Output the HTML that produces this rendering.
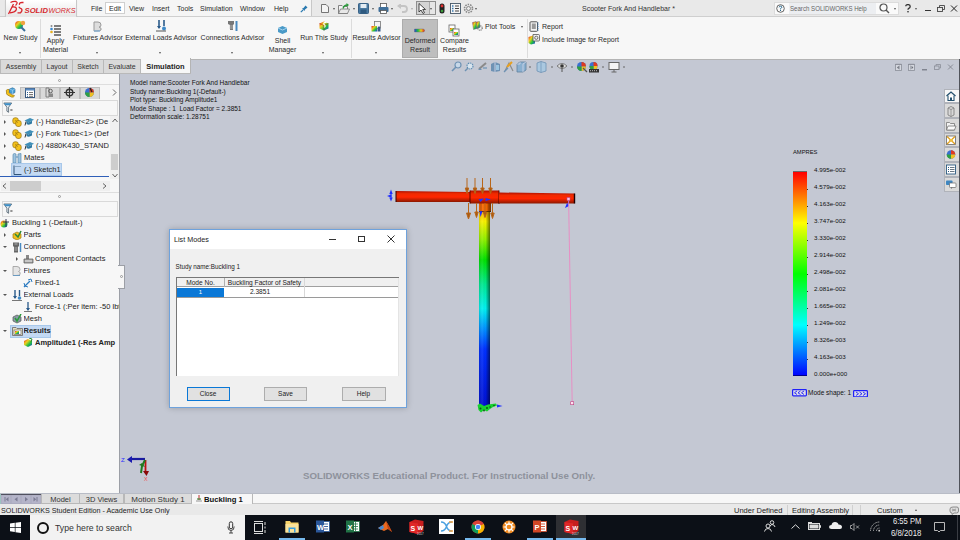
<!DOCTYPE html>
<html><head><meta charset="utf-8">
<style>
*{margin:0;padding:0;box-sizing:border-box}
html,body{width:960px;height:540px;overflow:hidden;background:#c4c8d3;font-family:"Liberation Sans",sans-serif;color:#222;font-size:7px}
.a{position:absolute}
.t{position:absolute;white-space:nowrap;line-height:1}
.c{transform:translateX(-50%)}
.m{font-size:7px;color:#2a2a2a}
.dd{position:absolute;width:0;height:0;border-left:1.6px solid transparent;border-right:1.6px solid transparent;border-top:2px solid #555}
.tab{position:absolute;top:59px;height:14px;background:#dadada;border:1px solid #b9b9b9;border-bottom:none;font-size:7px;color:#333;text-align:center;line-height:14.2px}
.tr{position:absolute;white-space:nowrap;line-height:1;font-size:7.5px;color:#222}
.ex{position:absolute;width:0;height:0;border-top:2px solid transparent;border-bottom:2px solid transparent;border-left:2.5px solid #555}
.exd{position:absolute;width:0;height:0;border-left:2px solid transparent;border-right:2px solid transparent;border-top:2.5px solid #555}
.vt{position:absolute;white-space:nowrap;line-height:1;font-size:6.5px;color:#111}
.lg{position:absolute;white-space:nowrap;line-height:1;font-size:6.25px;color:#111;left:814px}
.tk{position:absolute;left:807px;width:1px;height:1px;background:#333}
</style></head><body>
<svg width="0" height="0" style="position:absolute"><defs>
<linearGradient id="rb" x1="0" y1="0" x2="1" y2="1"><stop offset="0" stop-color="#e02020"/><stop offset=".35" stop-color="#f0d020"/><stop offset=".65" stop-color="#20c040"/><stop offset="1" stop-color="#2040e0"/></linearGradient>
<linearGradient id="rbh" x1="0" y1="0" x2="1" y2="0"><stop offset="0" stop-color="#2040e0"/><stop offset=".35" stop-color="#20c040"/><stop offset=".65" stop-color="#f0d020"/><stop offset="1" stop-color="#e02020"/></linearGradient>
</defs></svg>
<!-- ===== title bar ===== -->
<div class="a" style="left:0;top:0;width:960px;height:17px;background:#e9e9e9;border-bottom:1px solid #cfcfcf"></div>
<div class="a" style="left:77px;top:0;width:234px;height:16px;background:#f5f5f5"></div>
<div class="a" style="left:311px;top:0;width:1.5px;height:16px;background:#c8c8c8"></div>
<div class="a" style="left:5px;top:0;width:72px;height:19px;background:linear-gradient(#ffffff,#e4e4e4);border:1px solid #c8c8c8;border-top:none;box-shadow:0 1px 1px rgba(0,0,0,.08)"></div>
<svg class="a" style="left:7px;top:0px" width="70" height="16" viewBox="0 0 70 16">
 <path d="M1.5 14 L6.5 4 M3.5 2.5 Q6 1 9 1.5 Q11.5 2.5 8.5 5.5 M5.5 7 Q10 6.5 9.3 9.5 Q8.5 12.3 3 12.8 M12.5 4.8 Q12 2.5 15 2.5 H16.5 M11.8 6.8 Q12.5 8.5 14.5 8.8 Q15.8 10.5 13.5 12.8 H10.5" stroke="#d8262e" stroke-width="1.3" fill="none"/>
 <text x="17.5" y="12.5" font-family="Liberation Sans" font-weight="bold" font-style="italic" font-size="8" fill="#d52a2f" textLength="23.5" lengthAdjust="spacingAndGlyphs">SOLID</text>
 <text x="41.5" y="12.5" font-family="Liberation Sans" font-style="italic" font-size="8" fill="#d52a2f" textLength="27" lengthAdjust="spacingAndGlyphs">WORKS</text>
</svg>
<div class="t m" style="left:91px;top:5px">File</div>
<div class="a" style="left:105px;top:2px;width:20px;height:12px;background:#fff;border:1px solid #cfcfcf"></div>
<div class="t m" style="left:109px;top:5px">Edit</div>
<div class="t m" style="left:129px;top:5px">View</div>
<div class="t m" style="left:152px;top:5px">Insert</div>
<div class="t m" style="left:177px;top:5px">Tools</div>
<div class="t m" style="left:200px;top:5px">Simulation</div>
<div class="t m" style="left:240px;top:5px">Window</div>
<div class="t m" style="left:274px;top:5px">Help</div>
<svg class="a" style="left:300px;top:5px" width="8" height="8" viewBox="0 0 8 8"><path d="M0.8 7.2 L3 5" stroke="#2a7ab0" stroke-width="1.2"/><path d="M2 3.5 L4.5 6 L5 4.5 L7.5 2.5 L5.5 0.5 L3.5 3 Z" fill="#2a7ab0"/></svg>
<div class="a" style="left:312px;top:0;width:648px;height:16px;background:#e9e9e9"></div>
<!-- new -->
<svg class="a" style="left:321px;top:4px" width="8" height="9" viewBox="0 0 8 9"><path d="M0.5 0.5 H5 L7.5 3 V8.5 H0.5 Z" fill="#f4f4f4" stroke="#666" stroke-width="0.9"/></svg>
<div class="dd" style="left:333px;top:8px"></div>
<!-- open -->
<svg class="a" style="left:338px;top:3px" width="12" height="11" viewBox="0 0 12 11"><path d="M0.5 2.5 H4 L5 3.5 H9.5 V10.5 H0.5 Z" fill="#f3f3f3" stroke="#777" stroke-width="0.9"/><path d="M0.5 10.5 L2.5 6 H11.5 L9.5 10.5 Z" fill="#e8e8e8" stroke="#777" stroke-width="0.8"/><path d="M5 5.5 Q6 2 9.5 2" stroke="#2a9a3a" stroke-width="1.3" fill="none"/><path d="M8.5 0 L11 2 L8.5 4 Z" fill="#2a9a3a"/></svg>
<div class="dd" style="left:353px;top:8px"></div>
<!-- save -->
<svg class="a" style="left:358px;top:3px" width="11" height="11" viewBox="0 0 11 11"><rect x="0.5" y="0.5" width="10" height="10" rx="0.8" fill="#4a7ba3" stroke="#2f5a80" stroke-width="0.9"/><rect x="2.5" y="1" width="6" height="4" fill="#e4edf4"/><rect x="2.5" y="6.5" width="6" height="4" fill="#2f5a80"/></svg>
<div class="dd" style="left:372px;top:8px"></div>
<!-- print -->
<svg class="a" style="left:378px;top:3px" width="11" height="11" viewBox="0 0 11 11"><rect x="2.5" y="0.5" width="6" height="4" fill="#fff" stroke="#555" stroke-width="0.8"/><rect x="0.5" y="4" width="10" height="5" rx="1" fill="#3f6f99"/><rect x="2.5" y="7.5" width="6" height="3" fill="#fff" stroke="#555" stroke-width="0.8"/></svg>
<div class="dd" style="left:391px;top:8px"></div>
<!-- undo -->
<svg class="a" style="left:397px;top:4px" width="11" height="9" viewBox="0 0 11 9"><path d="M3 2 H7 Q10 2 10 5 Q10 8 7 8 H5" stroke="#c4c4c4" stroke-width="1.8" fill="none"/><path d="M0 2 L4 -1 V5 Z" fill="#c4c4c4"/></svg>
<div class="dd" style="left:411px;top:8px;border-top-color:#aaa"></div>
<!-- select pressed -->
<div class="a" style="left:416px;top:1px;width:20px;height:14px;background:#d4d4d4;border:1px solid #8e8e8e"></div>
<div class="a" style="left:429px;top:2px;width:6px;height:12px;background:#e6e6e6;border-left:1px solid #aaa"></div>
<svg class="a" style="left:418px;top:3px" width="9" height="11" viewBox="0 0 9 11"><path d="M1 0.5 V9 L3 7 L5 10.5 L6.5 9.7 L4.7 6.5 H7.5 Z" fill="#fff" stroke="#333" stroke-width="0.9"/></svg>
<div class="dd" style="left:430px;top:8px"></div>
<!-- traffic light -->
<svg class="a" style="left:439px;top:3px" width="6" height="11" viewBox="0 0 6 11"><rect x="0.5" y="0.5" width="5" height="10" rx="2.5" fill="#222"/><circle cx="3" cy="3" r="1.4" fill="#e03030"/><circle cx="3" cy="8" r="1.3" fill="#3a9a3a"/></svg>
<!-- list -->
<svg class="a" style="left:450px;top:3px" width="11" height="11" viewBox="0 0 11 11"><rect x="0.5" y="0.5" width="10" height="10" fill="#f4f4f4" stroke="#456" stroke-width="0.9"/><path d="M2 3 H3.5 M2 5.5 H3.5 M2 8 H3.5" stroke="#3a7ab0" stroke-width="1.3"/><path d="M5 3 H9 M5 5.5 H9 M5 8 H9" stroke="#444" stroke-width="1"/></svg>
<!-- gear -->
<svg class="a" style="left:463px;top:3px" width="11" height="11" viewBox="0 0 11 11"><circle cx="5.5" cy="5.5" r="4" fill="none" stroke="#888" stroke-width="1.6" stroke-dasharray="1.5 1"/><circle cx="5.5" cy="5.5" r="2" fill="none" stroke="#888" stroke-width="1"/></svg>
<div class="dd" style="left:475px;top:8px"></div>

<div class="t m" style="left:582px;top:5px;color:#333">Scooter Fork And Handlebar *</div>
<!-- search -->
<div class="a" style="left:774px;top:2px;width:125px;height:13px;background:#fafafa;border:1px solid #dcdcdc"></div>
<div class="a" style="left:789px;top:3px;width:87px;height:11px;background:#eceef1"></div>
<svg class="a" style="left:776px;top:4px" width="9" height="9" viewBox="0 0 9 9"><circle cx="4.5" cy="4.5" r="3.8" fill="none" stroke="#555" stroke-width="0.9"/><path d="M3.2 3.3 Q3.2 2.2 4.5 2.2 Q5.8 2.2 5.8 3.3 Q5.8 4 4.5 4.6 V5.4" fill="none" stroke="#2a6a90" stroke-width="1"/><rect x="4" y="6" width="1" height="1" fill="#2a6a90"/></svg>
<div class="t" style="left:790px;top:5.5px;font-size:6.5px;color:#666;transform:scaleX(.94);transform-origin:0 0">Search SOLIDWORKS Help</div>
<svg class="a" style="left:879px;top:3px" width="11" height="11" viewBox="0 0 11 11"><circle cx="4.5" cy="4.5" r="3.5" stroke="#555" stroke-width="1.2" fill="none"/><path d="M7 7 L10 10" stroke="#555" stroke-width="1.4"/></svg>
<div class="dd" style="left:894px;top:8px"></div>
<svg class="a" style="left:905px;top:4px" width="6" height="9" viewBox="0 0 6 9"><path d="M0.8 2.3 Q0.8 0.6 3 0.6 Q5.2 0.6 5.2 2.4 Q5.2 3.6 3.8 4.3 Q3 4.7 3 5.8" fill="none" stroke="#333" stroke-width="1.3"/><rect x="2.3" y="7" width="1.4" height="1.4" fill="#333"/></svg>
<div class="dd" style="left:915px;top:8px"></div>
<div class="a" style="left:925px;top:10px;width:5.5px;height:1.2px;background:#333"></div>
<svg class="a" style="left:937px;top:4.5px" width="8" height="7" viewBox="0 0 8 7"><rect x="0.5" y="2.5" width="5" height="4" fill="none" stroke="#444" stroke-width="0.9"/><path d="M2.5 2.5 V0.5 H7.5 V4.5 H5.5" fill="none" stroke="#444" stroke-width="0.9"/></svg>
<svg class="a" style="left:950px;top:5px" width="8" height="7" viewBox="0 0 8 7"><path d="M1 0.5 L7 6.5 M7 0.5 L1 6.5" stroke="#222" stroke-width="1"/></svg>

<!-- ===== ribbon ===== -->
<div class="a" style="left:0;top:17px;width:960px;height:42px;background:#f7f7f7"></div><div class="a" style="left:190px;top:58.5px;width:770px;height:1px;background:#b4b4b4"></div>
<!-- New Study -->
<svg class="a" style="left:14px;top:20px" width="13" height="13" viewBox="0 0 13 13"><circle cx="5" cy="5" r="4" fill="url(#rb)"/><circle cx="9" cy="3" r="2.2" fill="#f0a040"/><path d="M7.5 7.5 L11 11" stroke="#3a6f9a" stroke-width="2"/></svg>
<div class="t m c" style="left:20.5px;top:33.5px">New Study</div>
<div class="dd" style="left:18.5px;top:52px"></div>
<div class="a" style="left:40px;top:19px;width:1px;height:39px;background:#dcdcdc"></div>
<!-- Apply material -->
<svg class="a" style="left:50px;top:24px" width="12" height="12" viewBox="0 0 12 12"><path d="M4 2 H11 M4 5 H11 M4 8 H11 M4 11 H11" stroke="#555" stroke-width="1.3"/><circle cx="1.5" cy="5" r="1.3" fill="#3a8ad0"/><circle cx="1.5" cy="8" r="1.3" fill="#e8b020"/><circle cx="1.5" cy="2" r="1" fill="#888"/></svg>
<div class="t m c" style="left:55.5px;top:36.8px">Apply</div>
<div class="t m c" style="left:55.5px;top:45.8px">Material</div>
<!-- Fixtures advisor -->
<svg class="a" style="left:92px;top:21px" width="11" height="11" viewBox="0 0 11 11"><path d="M2 1 H6 Q9 1 9 4 Q9 6 7 6 Q10 7 9 9 Q8 10 5 10 H2 Z" stroke="#999" stroke-width="1" fill="#ddd"/><path d="M2 10 L8 10" stroke="#7aaad0" stroke-width="1.2"/></svg>
<div class="t m c" style="left:98px;top:33.5px">Fixtures Advisor</div>
<div class="dd" style="left:95.5px;top:52px"></div>
<!-- External Loads -->
<svg class="a" style="left:156px;top:20px" width="11" height="12" viewBox="0 0 11 12"><path d="M3 0 V8" stroke="#2a5a8a" stroke-width="1.6"/><path d="M1 6 L3 9 L5 6 Z" fill="#2a5a8a"/><path d="M8 0 V6" stroke="#2a5a8a" stroke-width="1.6"/><circle cx="8" cy="8.5" r="2" fill="#3f8ac8"/><path d="M0 11 H10" stroke="#555" stroke-width="1"/></svg>
<div class="t m c" style="left:161px;top:33.5px">External Loads Advisor</div>
<div class="dd" style="left:159px;top:52px"></div>
<!-- Connections -->
<svg class="a" style="left:227px;top:20px" width="12" height="12" viewBox="0 0 12 12"><path d="M1 1 H7 V4 L6 5 V10 H3 V5 L1 4 Z" fill="#777"/><path d="M2 6 H6 M2 8 H6" stroke="#ccc" stroke-width="0.7"/><path d="M9.5 1 V11" stroke="#4a8ac0" stroke-width="2"/></svg>
<div class="t m c" style="left:232.5px;top:33.5px">Connections Advisor</div>
<div class="dd" style="left:230.5px;top:52px"></div>
<!-- Shell Manager -->
<svg class="a" style="left:277px;top:25px" width="11" height="10" viewBox="0 0 11 10"><path d="M1 3 L5.5 1 L10 3 V7 L5.5 9 L1 7 Z" fill="#4a9ac8"/><path d="M1 3 L5.5 5 L10 3" stroke="#a8d4ee" stroke-width="1" fill="none"/></svg>
<div class="t m c" style="left:282.5px;top:36.8px">Shell</div>
<div class="t m c" style="left:282.5px;top:45.8px">Manager</div>
<!-- Run This Study -->
<svg class="a" style="left:318px;top:20px" width="12" height="12" viewBox="0 0 12 12"><path d="M1.5 3.5 L6 1.5 L10.5 3.5 V8.5 L6 10.5 L1.5 8.5 Z" fill="url(#rb)"/><path d="M1.5 3.5 L6 5.5 L10.5 3.5 M6 5.5 V10.5" stroke="#a02020" stroke-width="0.5" fill="none"/><path d="M8.5 2.5 Q5 2 6 4.5 Q8 5.5 6.5 7.5" stroke="#fff" stroke-width="1.1" fill="none"/></svg>
<div class="t m c" style="left:324px;top:33.5px">Run This Study</div>
<div class="dd" style="left:322px;top:52px"></div>
<div class="a" style="left:351px;top:19px;width:1px;height:39px;background:#dcdcdc"></div>
<!-- Results advisor -->
<svg class="a" style="left:371px;top:21px" width="11" height="11" viewBox="0 0 11 11"><rect x="3.5" y="0.5" width="6" height="7" fill="#f4f4f4" stroke="#777" stroke-width="0.8"/><rect x="0.5" y="5" width="5.5" height="5.5" fill="url(#rb)"/><circle cx="8" cy="7" r="1.4" fill="#345a8a"/><rect x="6.5" y="8" width="3" height="2.5" fill="#345a8a"/></svg>
<div class="t m c" style="left:376.5px;top:33.5px">Results Advisor</div>
<div class="dd" style="left:374.5px;top:52px"></div>
<!-- Deformed result -->
<div class="a" style="left:402px;top:19px;width:36px;height:39px;background:#bebebe;border:1px solid #acacac"></div>
<svg class="a" style="left:414px;top:28px" width="11" height="5" viewBox="0 0 11 5"><path d="M0.5 1 H9 Q10.5 1 10.5 2.5 Q10.5 4 9 4 H0.5 Z" fill="url(#rbh)" stroke="#666" stroke-width="0.4"/></svg>
<div class="t m c" style="left:420px;top:36.8px">Deformed</div>
<div class="t m c" style="left:420px;top:45.8px">Result</div>
<!-- Compare results -->
<svg class="a" style="left:448px;top:24px" width="12" height="13" viewBox="0 0 12 13"><rect x="1" y="1" width="6" height="7" fill="#fff" stroke="#666" stroke-width="0.8"/><rect x="2" y="4" width="4" height="3" fill="url(#rb)"/><rect x="5" y="5" width="6" height="7" fill="#fff" stroke="#666" stroke-width="0.8"/><rect x="6" y="8" width="4" height="3" fill="url(#rb)"/></svg>
<div class="t m c" style="left:454.5px;top:36.8px">Compare</div>
<div class="t m c" style="left:454.5px;top:45.8px">Results</div>
<!-- Plot tools -->
<svg class="a" style="left:472px;top:21px" width="11" height="10" viewBox="0 0 11 10"><path d="M0.5 1.5 L4 0.5 L5 7.5 L1.5 8.5 Z" fill="url(#rb)" stroke="#555" stroke-width="0.4"/><path d="M4.2 1 L7.5 0.5 L8 6.5 L5 7.5 Z" fill="url(#rb)" stroke="#555" stroke-width="0.4"/><circle cx="8" cy="7" r="2.2" fill="none" stroke="#666" stroke-width="1.1" stroke-dasharray="1 0.6"/></svg>
<div class="t m" style="left:485px;top:22.5px">Plot Tools</div>
<div class="dd" style="left:520.5px;top:25.5px"></div>
<div class="a" style="left:527px;top:19px;width:1px;height:39px;background:#dcdcdc"></div>
<!-- Report -->
<svg class="a" style="left:529px;top:21px" width="11" height="11" viewBox="0 0 11 11"><rect x="1" y="0.8" width="7.5" height="9.5" rx="0.8" fill="#f4f4f4" stroke="#444" stroke-width="0.9"/><rect x="2.8" y="2.5" width="4" height="5.5" fill="#9a9a9a"/><path d="M9 1.5 V10" stroke="#3a7ab8" stroke-width="1" stroke-dasharray="1 0.8"/></svg>
<div class="t m" style="left:542px;top:22.5px">Report</div>
<svg class="a" style="left:528px;top:34px" width="12" height="11" viewBox="0 0 12 11"><path d="M0.5 3 L5 1.5 L7 3 V9.5 L3 10.5 L0.5 9 Z" fill="url(#rb)"/><path d="M5 0.5 H10.5 Q11.5 0.5 11.5 1.5 V6 Q11.5 7 10.5 7 H5 Z" fill="#eee" stroke="#555" stroke-width="0.8"/><circle cx="8.3" cy="3.8" r="1.6" fill="none" stroke="#555" stroke-width="0.8"/></svg>
<div class="t m" style="left:542px;top:35.5px">Include Image for Report</div>


<!-- ===== tabs ===== -->
<div class="tab" style="left:0;width:42px">Assembly</div>
<div class="tab" style="left:41px;width:32px">Layout</div>
<div class="tab" style="left:72px;width:32px">Sketch</div>
<div class="tab" style="left:103px;width:38px">Evaluate</div>
<div class="tab" style="left:141px;top:58px;height:15px;width:50px;background:#f7f7f7;font-weight:bold;color:#222;border:none;border-right:1px solid #b4b4b4;line-height:17.6px;font-size:7.5px">Simulation</div>
<div class="a" style="left:0;top:73px;width:191px;height:1px;background:#b9b9b9"></div>

<!-- ===== left panel ===== -->
<div class="a" style="left:0;top:74px;width:120px;height:420px;background:#f7f7f7;border-right:1px solid #9c9fa6"></div>
<!-- top handle strip -->
<div class="a" style="left:0;top:74px;width:119px;height:11px;background:#f7f7f7;border-bottom:1px solid #dedede"></div>
<div class="a" style="left:57.5px;top:78.5px;width:3px;height:3px;border:1px solid #999;border-radius:50%"></div>
<!-- icon tabs -->
<div class="a" style="left:0;top:85px;width:119px;height:14px;background:#f7f7f7"></div>
<div class="a" style="left:19.5px;top:86.5px;width:20px;height:12.5px;background:#d9d9d9;border:1px solid #bdbdbd;border-bottom:none"></div>
<div class="a" style="left:39.5px;top:86.5px;width:20px;height:12.5px;background:#d9d9d9;border:1px solid #bdbdbd;border-bottom:none"></div>
<div class="a" style="left:59.5px;top:86.5px;width:20px;height:12.5px;background:#d9d9d9;border:1px solid #bdbdbd;border-bottom:none"></div>
<div class="a" style="left:79.5px;top:86.5px;width:20px;height:12.5px;background:#d9d9d9;border:1px solid #bdbdbd;border-bottom:none"></div>
<svg class="a" style="left:5px;top:86.5px" width="11" height="11" viewBox="0 0 11 11"><path d="M1.5 5 Q0.5 3 2.5 2.5 L4 2.5 Q5 4 4 5.5 L7 8 Q9 7.5 9.5 9 Q8.5 10.5 6.5 10 L2.5 8 Q1 7 1.5 5 Z" fill="#f2c21a" stroke="#9a7410" stroke-width="0.7"/><path d="M4.5 2 L7.5 0.8 L10 2 V5.5 L7.5 6.8 L4.5 5.5 Z" fill="#4aa0d8" stroke="#2a6a98" stroke-width="0.6"/><path d="M4.5 2 L7.5 3.2 L10 2 M7.5 3.2 V6.8" stroke="#bfe0f4" stroke-width="0.5" fill="none"/></svg>
<svg class="a" style="left:25px;top:88px" width="10" height="10" viewBox="0 0 10 10"><rect x="0.5" y="0.5" width="9" height="9" fill="#fff" stroke="#3a5a80" stroke-width="1"/><rect x="0.5" y="0.5" width="9" height="2" fill="#5a8ac0"/><path d="M2 4.5 H3 M2 6.5 H3 M2 8.3 H3" stroke="#2c5d8f" stroke-width="1"/><path d="M4 4.5 H8 M4 6.5 H8 M4 8.3 H8" stroke="#555" stroke-width="0.8"/></svg>
<svg class="a" style="left:45px;top:87px" width="9" height="11" viewBox="0 0 9 11"><path d="M1 1 H4 V10 H1 Z" fill="none" stroke="#777" stroke-width="0.9"/><circle cx="5.5" cy="4" r="1.8" fill="none" stroke="#555" stroke-width="0.9"/><rect x="4" y="6.5" width="4" height="3.5" fill="#888"/></svg>
<svg class="a" style="left:64px;top:87px" width="11" height="11" viewBox="0 0 11 11"><circle cx="5.5" cy="5.5" r="3.3" fill="none" stroke="#333" stroke-width="1.4"/><path d="M5.5 0 V11 M0 5.5 H11" stroke="#333" stroke-width="1.2"/></svg>
<svg class="a" style="left:84px;top:87px" width="11" height="11" viewBox="0 0 11 11"><circle cx="5.5" cy="5.5" r="4.5" fill="#3a70d0"/><path d="M5.5 5.5 L5.5 1 A4.5 4.5 0 0 1 10 5.5 Z" fill="#e03a20"/><path d="M5.5 5.5 L10 5.5 A4.5 4.5 0 0 1 5.5 10 Z" fill="#f0c020"/><path d="M5.5 5.5 L5.5 10 A4.5 4.5 0 0 1 1 5.5 Z" fill="#30a040"/><path d="M6 1 L8 5" stroke="#222" stroke-width="1.2"/></svg>
<svg class="a" style="left:111.5px;top:89px" width="5" height="7" viewBox="0 0 5 7"><path d="M1 0.5 L4 3.5 L1 6.5" stroke="#555" stroke-width="0.9" fill="none"/></svg>
<!-- filter box 1 -->
<div class="a" style="left:1.5px;top:99.5px;width:116px;height:16px;background:#f7f7f7;border:1px solid #d9d9d9"></div>
<svg class="a" style="left:3px;top:102px" width="10" height="11" viewBox="0 0 10 11"><path d="M0.8 1 H8.7 L5.6 5.2 V10.3 L3.9 9.2 V5.2 Z" fill="#e8f0f6" stroke="#4a5a68" stroke-width="0.8"/><path d="M1 1.2 H8.5 L7 3.2 H2.5 Z" fill="#3d8fc8"/><rect x="7.3" y="7.5" width="2.2" height="1" fill="#333"/></svg>
<!-- tree 1 -->
<div class="a" style="left:110px;top:115.5px;width:8.5px;height:63px;background:#f0f0f0"></div>
<svg class="a" style="left:111.5px;top:118px" width="6" height="5" viewBox="0 0 6 5"><path d="M0.5 4 L3 1 L5.5 4" stroke="#555" stroke-width="0.9" fill="none"/></svg>
<div class="a" style="left:110.5px;top:154px;width:7px;height:16px;background:#cdcdcd"></div>
<svg class="a" style="left:111.5px;top:173px" width="6" height="5" viewBox="0 0 6 5"><path d="M0.5 1 L3 4 L5.5 1" stroke="#555" stroke-width="0.9" fill="none"/></svg>
<div class="ex" style="left:4px;top:119.5px"></div>
<svg class="a" style="left:12px;top:116.5px" width="10" height="10" viewBox="0 0 10 10"><rect x="0.8" y="0.8" width="5.5" height="6" rx="2.2" fill="#f4c21c" stroke="#9a7410" stroke-width="0.7"/><rect x="3.7" y="3.5" width="5.5" height="6" rx="2.2" fill="#f4c21c" stroke="#9a7410" stroke-width="0.7"/><path d="M3 3 Q5 4 5.5 6" stroke="#9a7410" stroke-width="0.6" fill="none"/></svg>
<svg class="a" style="left:24px;top:117.0px" width="10" height="9" viewBox="0 0 10 9"><path d="M0.5 3.5 L6 1 L10 2.8 L4.5 5.5 Z" fill="#3f8fb8"/><path d="M2.5 4.5 V7 Q5 8.5 8 6.5 V3.8 L4.5 5.5 Z" fill="#2f7aa3"/><path d="M2 4.5 L1 8.5" stroke="#222" stroke-width="0.9"/></svg>
<div class="tr" style="left:36px;top:117.4px;line-height:1.3;width:73px;overflow:hidden">(-) HandleBar&lt;2&gt; (De</div>
<div class="ex" style="left:4px;top:131.5px"></div>
<svg class="a" style="left:12px;top:128.5px" width="10" height="10" viewBox="0 0 10 10"><rect x="0.8" y="0.8" width="5.5" height="6" rx="2.2" fill="#f4c21c" stroke="#9a7410" stroke-width="0.7"/><rect x="3.7" y="3.5" width="5.5" height="6" rx="2.2" fill="#f4c21c" stroke="#9a7410" stroke-width="0.7"/><path d="M3 3 Q5 4 5.5 6" stroke="#9a7410" stroke-width="0.6" fill="none"/></svg>
<svg class="a" style="left:24px;top:129.0px" width="10" height="9" viewBox="0 0 10 9"><path d="M0.5 3.5 L6 1 L10 2.8 L4.5 5.5 Z" fill="#3f8fb8"/><path d="M2.5 4.5 V7 Q5 8.5 8 6.5 V3.8 L4.5 5.5 Z" fill="#2f7aa3"/><path d="M2 4.5 L1 8.5" stroke="#222" stroke-width="0.9"/></svg>
<div class="tr" style="left:36px;top:129.4px;line-height:1.3;width:73px;overflow:hidden">(-) Fork Tube&lt;1&gt; (Def</div>
<div class="ex" style="left:4px;top:143.5px"></div>
<svg class="a" style="left:12px;top:140.5px" width="10" height="10" viewBox="0 0 10 10"><rect x="0.8" y="0.8" width="5.5" height="6" rx="2.2" fill="#f4c21c" stroke="#9a7410" stroke-width="0.7"/><rect x="3.7" y="3.5" width="5.5" height="6" rx="2.2" fill="#f4c21c" stroke="#9a7410" stroke-width="0.7"/><path d="M3 3 Q5 4 5.5 6" stroke="#9a7410" stroke-width="0.6" fill="none"/></svg>
<svg class="a" style="left:24px;top:141.0px" width="10" height="9" viewBox="0 0 10 9"><path d="M0.5 3.5 L6 1 L10 2.8 L4.5 5.5 Z" fill="#3f8fb8"/><path d="M2.5 4.5 V7 Q5 8.5 8 6.5 V3.8 L4.5 5.5 Z" fill="#2f7aa3"/><path d="M2 4.5 L1 8.5" stroke="#222" stroke-width="0.9"/></svg>
<div class="tr" style="left:36px;top:141.4px;line-height:1.3;width:73px;overflow:hidden">(-) 4880K430_STANDA</div>
<div class="ex" style="left:4px;top:155.5px"></div>
<svg class="a" style="left:12px;top:152.5px" width="10" height="11" viewBox="0 0 10 11"><path d="M1 2 Q1 0.5 2.5 0.5 L4 1 V10 L1 10 Z" fill="#9ec4e0" stroke="#5a8ab0" stroke-width="0.7"/><path d="M6 1 L9 0.5 V10 L6 10 Z" fill="#9ec4e0" stroke="#5a8ab0" stroke-width="0.7"/><path d="M4 4 H6" stroke="#5a8ab0"/></svg>
<div class="tr" style="left:24px;top:153.5px">Mates</div>
<div class="a" style="left:11px;top:163px;width:51px;height:13px;background:#c3d9f3;border:1px solid #a8c8ea"></div>
<svg class="a" style="left:12.5px;top:164.5px" width="9" height="10" viewBox="0 0 9 10"><path d="M1 0.5 V9.5 H8.5" stroke="#335577" stroke-width="1" fill="none"/><path d="M2 1.5 H8" stroke="#7a9ab8" stroke-width="0.8"/></svg>
<div class="tr" style="left:24px;top:165.5px">(-) Sketch1</div>
<div class="a" style="left:0;top:176px;width:109px;height:1px;background:#2f5fb8"></div>
<div class="a" style="left:0;top:179px;width:119px;height:13px;background:#f7f7f7"></div>
<div class="a" style="left:1px;top:181px;width:109px;height:9.5px;background:#efefef"></div>
<div class="a" style="left:10px;top:181px;width:31px;height:9.5px;background:#cdcdcd"></div>
<svg class="a" style="left:2px;top:183px" width="5" height="6" viewBox="0 0 5 6"><path d="M4 0.5 L1 3 L4 5.5" stroke="#555" stroke-width="0.9" fill="none"/></svg>
<svg class="a" style="left:102px;top:183px" width="5" height="6" viewBox="0 0 5 6"><path d="M1 0.5 L4 3 L1 5.5" stroke="#555" stroke-width="0.9" fill="none"/></svg>
<div class="a" style="left:0;top:192px;width:119px;height:1px;background:#dedede"></div>
<div class="a" style="left:57.5px;top:195px;width:3px;height:3px;border:1px solid #999;border-radius:50%"></div>
<div class="a" style="left:1.5px;top:200.5px;width:116px;height:16px;background:#f7f7f7;border:1px solid #d9d9d9"></div>
<svg class="a" style="left:3px;top:203px" width="10" height="11" viewBox="0 0 10 11"><path d="M0.8 1 H8.7 L5.6 5.2 V10.3 L3.9 9.2 V5.2 Z" fill="#e8f0f6" stroke="#4a5a68" stroke-width="0.8"/><path d="M1 1.2 H8.5 L7 3.2 H2.5 Z" fill="#3d8fc8"/><rect x="7.3" y="7.5" width="2.2" height="1" fill="#333"/></svg>
<svg class="a" style="left:0px;top:217.5px" width="11" height="10" viewBox="0 0 11 10"><circle cx="4" cy="6" r="3.5" fill="url(#rb)"/><path d="M6 1 V9 M3 4 L9 4" stroke="#335" stroke-width="1"/></svg>
<div class="tr" style="left:12px;top:218.4px;line-height:1.3;width:107px;overflow:hidden">Buckling 1 (-Default-)</div>
<div class="ex" style="left:4px;top:232.5px"></div>
<svg class="a" style="left:12px;top:229.5px" width="10" height="10" viewBox="0 0 10 10"><path d="M1 4 L5 2 L9 4 V8 L5 10 L1 8 Z" fill="#f0c020" stroke="#a07810" stroke-width="0.7"/><path d="M3 4 L6 7 L9 1" stroke="#2a8a3a" stroke-width="1.5" fill="none"/></svg>
<div class="tr" style="left:23.5px;top:230.4px;line-height:1.3;width:95.5px;overflow:hidden">Parts</div>
<div class="exd" style="left:3px;top:245.5px"></div>
<svg class="a" style="left:12px;top:241.5px" width="10" height="11" viewBox="0 0 10 11"><path d="M1 0.5 H7 V4 L6 5 V10.5 H2 V5 L1 4 Z" fill="#666"/><path d="M2.5 2 H5.5 M2.5 6 H5.5 M2.5 8 H5.5" stroke="#ccc" stroke-width="0.7"/><path d="M8.5 1 V10" stroke="#4a8ac0" stroke-width="1.5"/></svg>
<div class="tr" style="left:23.5px;top:242.4px;line-height:1.3;width:95.5px;overflow:hidden">Connections</div>
<div class="ex" style="left:16px;top:256.5px"></div>
<svg class="a" style="left:23px;top:253.5px" width="11" height="10" viewBox="0 0 11 10"><path d="M3 1 H6 V5 H3 Z" fill="#888"/><path d="M1 5 H10 V9 H1 Z" fill="#aaa" stroke="#555" stroke-width="0.7"/><path d="M2 7 H9" stroke="#fff" stroke-width="0.7"/></svg>
<div class="tr" style="left:35px;top:254.4px;line-height:1.3;width:84px;overflow:hidden">Component Contacts</div>
<div class="exd" style="left:3px;top:269.5px"></div>
<svg class="a" style="left:12px;top:265.5px" width="10" height="10" viewBox="0 0 10 10"><path d="M1 0.5 H5 Q8 0.5 8 3.5 Q8 5 6.5 5.5 Q9 6 8 8.5 Q7 9.5 4 9.5 H1 Z" fill="#e5e5e5" stroke="#999" stroke-width="0.8"/><path d="M1 9.5 H8" stroke="#6a9ac0" stroke-width="1"/></svg>
<div class="tr" style="left:23.5px;top:266.4px;line-height:1.3;width:95.5px;overflow:hidden">Fixtures</div>
<svg class="a" style="left:23px;top:277.5px" width="10" height="10" viewBox="0 0 10 10"><path d="M1 9 L7 3" stroke="#2a7ac0" stroke-width="1.2"/><path d="M5 2 L8 1 L9 4" stroke="#2a7ac0" stroke-width="1" fill="none"/><path d="M1 5 Q1 9 5 9" stroke="#2a7ac0" stroke-width="1" fill="none"/></svg>
<div class="tr" style="left:35px;top:278.4px;line-height:1.3;width:84px;overflow:hidden">Fixed-1</div>
<div class="exd" style="left:3px;top:293.5px"></div>
<svg class="a" style="left:12px;top:289.5px" width="10" height="11" viewBox="0 0 10 11"><path d="M3 0 V8" stroke="#2a5a8a" stroke-width="1.4"/><path d="M1 6 L3 9 L5 6 Z" fill="#2a5a8a"/><path d="M7.5 0 V6" stroke="#2a5a8a" stroke-width="1.4"/><circle cx="7.5" cy="8" r="1.8" fill="#3f8ac8"/><path d="M0 10.5 H10" stroke="#555" stroke-width="0.8"/></svg>
<div class="tr" style="left:23.5px;top:290.4px;line-height:1.3;width:95.5px;overflow:hidden">External Loads</div>
<svg class="a" style="left:23px;top:301.5px" width="10" height="10" viewBox="0 0 10 10"><path d="M5 0 V8" stroke="#2a5a8a" stroke-width="1.3"/><path d="M3 6 L5 9 L7 6 Z" fill="#2a5a8a"/><path d="M1 9.5 H9" stroke="#555" stroke-width="0.8"/></svg>
<div class="tr" style="left:35px;top:302.4px;line-height:1.3;width:84px;overflow:hidden">Force-1 (:Per item: -50 lbf</div>
<svg class="a" style="left:12px;top:313.5px" width="10" height="10" viewBox="0 0 10 10"><path d="M1 3 L5 1 L9 3 V7 L5 9 L1 7 Z" fill="#8a9aa8" stroke="#555" stroke-width="0.7"/><path d="M3 4 L5 7 L9 0" stroke="#2a9a3a" stroke-width="1.5" fill="none"/></svg>
<div class="tr" style="left:23.5px;top:314.4px;line-height:1.3;width:95.5px;overflow:hidden">Mesh</div>
<div class="exd" style="left:3px;top:329.5px"></div>
<div class="a" style="left:10px;top:325px;width:41px;height:12.5px;background:#c3d9f3;border:1px solid #a8c8ea"></div>
<svg class="a" style="left:12px;top:325.5px" width="11" height="10" viewBox="0 0 11 10"><path d="M0.5 1.5 H4 L5 2.5 H10.5 V9.5 H0.5 Z" fill="#e8e0c0" stroke="#666" stroke-width="0.8"/><rect x="2" y="4" width="7" height="4.5" fill="#fff" stroke="#555" stroke-width="0.6"/><rect x="3" y="5" width="4" height="3" fill="url(#rb)"/></svg>
<div class="tr" style="left:23.5px;top:326.4px;line-height:1.3;font-weight:bold;width:95.5px;overflow:hidden">Results</div>
<svg class="a" style="left:23px;top:337.5px" width="10" height="10" viewBox="0 0 10 10"><path d="M1 3 L5 1 L9 3 V7 L5 9 L1 7 Z" fill="url(#rb)"/><path d="M6 0 L9 1 L8 4" stroke="#2a8a3a" stroke-width="1" fill="none"/></svg>
<div class="tr" style="left:35px;top:338.4px;line-height:1.3;font-weight:bold;width:84px;overflow:hidden">Amplitude1 (-Res Amp</div>
<div class="a" style="left:118px;top:264.5px;width:6.5px;height:24px;background:#f7f7f7;border:1px solid #9c9fa6;border-left:none"></div>
<div class="a" style="left:120px;top:275px;width:3px;height:3px;border:1px solid #999;border-radius:50%"></div>


<!-- ===== viewport ===== -->
<!-- right dark edge -->
<div class="a" style="left:958.5px;top:59px;width:1.5px;height:435px;background:#50535a"></div>
<!-- info text -->
<div class="vt" style="left:130px;top:79.5px">Model name:Scooter Fork And Handlebar</div>
<div class="vt" style="left:130px;top:88.5px">Study name:Buckling 1(-Default-)</div>
<div class="vt" style="left:130px;top:96.5px">Plot type: Buckling Amplitude1</div>
<div class="vt" style="left:130px;top:105.5px">Mode Shape : 1 &nbsp;Load Factor = 2.3851</div>
<div class="vt" style="left:130px;top:113.5px">Deformation scale: 1.28751</div>
<!-- heads-up toolbar -->
<svg class="a" style="left:451px;top:61px" width="180" height="12" viewBox="0 0 180 12">
 <g transform="translate(0,0)"><circle cx="7" cy="4" r="3" fill="#c8d8e8" stroke="#6e92b4" stroke-width="1.2"/><path d="M5 6 L1 10" stroke="#6e92b4" stroke-width="1.6"/></g>
 <g transform="translate(13,0)"><circle cx="6" cy="5" r="3" fill="#d8e4ee" stroke="#5a8ab0" stroke-width="1.1" stroke-dasharray="1.5 0.8"/><path d="M4 7 L1 10" stroke="#6e92b4" stroke-width="1.5"/></g>
 <g transform="translate(26,0)"><path d="M2 8 L9 2" stroke="#8a8a8a" stroke-width="2"/><path d="M1 9 L5 9 L3 7" fill="#6e92b4"/><path d="M6 7 L10 7" stroke="#6e92b4" stroke-width="1.2"/></g>
 <g transform="translate(39,0)"><path d="M1 3 L5 1 L10 3 V10 L5 11 L1 10 Z" fill="#6e92b4"/><path d="M5 1 V11" stroke="#dde" stroke-width="0.8"/><rect x="6" y="4" width="3" height="5" fill="#9ac4e0"/></g>
 <g transform="translate(52,0)"><path d="M2 10 L6 2 L10 10" stroke="#8a8a8a" stroke-width="1.2" fill="none"/><path d="M4 6 L9 1" stroke="#e8a020" stroke-width="2"/><path d="M1 11 L5 7" stroke="#6e92b4" stroke-width="1.2"/></g>
 <g transform="translate(65,0)"><path d="M1 3 L4 1 H10 V9 L7 11 H1 Z" fill="#8ab0d0" stroke="#6080a0" stroke-width="0.8"/><path d="M4 1 V3 H1 M10 1 L7 3 V11" stroke="#dde" stroke-width="0.7" fill="none"/></g>
 <path d="M78 6 H80" stroke="#666" stroke-width="1"/>
 <g transform="translate(85,0)"><path d="M1 2 L5 0.5 L10 2 V10 L5 11.5 L1 10 Z" fill="#aac8e0" stroke="#6e92b4" stroke-width="0.8"/><path d="M5 0.5 V11.5" stroke="#6e92b4" stroke-width="0.7"/></g>
 <path d="M100 6 H102" stroke="#666" stroke-width="1"/>
 <g transform="translate(105,0)"><path d="M1 5 Q6 0 11 5 Q6 10 1 5 Z" fill="#ddd" stroke="#666" stroke-width="0.8"/><circle cx="6" cy="5" r="1.8" fill="#333"/><path d="M6 7 V11" stroke="#555" stroke-width="1"/></g>
 <path d="M120 6 H122" stroke="#666" stroke-width="1"/>
 <g transform="translate(125,0)"><circle cx="5.5" cy="5.5" r="4.5" fill="#3a70d0"/><path d="M5.5 5.5 L5.5 1 A4.5 4.5 0 0 1 10 5.5 Z" fill="#e03a20"/><path d="M5.5 5.5 L10 5.5 A4.5 4.5 0 0 1 5.5 10 Z" fill="#f0c020"/><path d="M5.5 5.5 L5.5 10 A4.5 4.5 0 0 1 1 5.5 Z" fill="#30a040"/><path d="M7 7 L11 11" stroke="#555" stroke-width="1.2"/></g>
 <g transform="translate(137,0)"><circle cx="5.5" cy="5" r="4" fill="#3a70d0"/><path d="M5.5 5 L5.5 1 A4 4 0 0 1 9.5 5 Z" fill="#e03a20"/><path d="M5.5 5 L9.5 5 A4 4 0 0 1 5.5 9 Z" fill="#f0c020"/><path d="M5.5 5 L5.5 9 A4 4 0 0 1 1.5 5 Z" fill="#30a040"/><rect x="1" y="8" width="10" height="3.5" fill="#333"/><path d="M2 9.7 H10" stroke="#ddd" stroke-width="0.8" stroke-dasharray="1 1"/></g>
 <path d="M151 6 H153" stroke="#666" stroke-width="1"/>
 <g transform="translate(157,0)"><rect x="1" y="1.5" width="10" height="7" fill="#f4f4f4" stroke="#666" stroke-width="1"/><path d="M6 8.5 V11 M3.5 11 H8.5" stroke="#666" stroke-width="1"/></g>
 <path d="M172 6 H174" stroke="#666" stroke-width="1"/>
</svg>
<!-- viewport window controls -->
<svg class="a" style="left:892px;top:62px" width="64" height="10" viewBox="0 0 64 10">
 <rect x="3.5" y="2.5" width="6" height="6" fill="#d4d7de" stroke="#8a8e98" stroke-width="0.8"/><rect x="3.5" y="1.8" width="6" height="0.8" fill="#8a8e98"/><path d="M6.8 3.8 L5 5.5 L6.8 7.2 Z" fill="#6a6e78"/><path d="M7.5 3.5 V7.5" stroke="#8a8e98" stroke-width="0.6"/>
 <rect x="16.5" y="2.5" width="6" height="6" fill="#d4d7de" stroke="#8a8e98" stroke-width="0.8"/><rect x="16.5" y="1.8" width="6" height="0.8" fill="#8a8e98"/><path d="M19.5 3.8 L21.3 5.5 L19.5 7.2 Z" fill="#6a6e78"/><path d="M18.5 3.5 V7.5" stroke="#8a8e98" stroke-width="0.6"/>
 <path d="M30 7.8 H35" stroke="#6a6e78" stroke-width="1.1"/>
 <rect x="42.5" y="4" width="4.5" height="3.5" fill="none" stroke="#8a8e98" stroke-width="0.8"/><path d="M44 4 V2.5 H48.5 V6 H47" fill="none" stroke="#8a8e98" stroke-width="0.8"/>
 <path d="M56 2.5 L61 7.5 M61 2.5 L56 7.5" stroke="#7a7e88" stroke-width="0.8"/>
</svg>
<!-- right task pane tabs -->
<div class="a" style="left:943.5px;top:89px;width:15px;height:14px;background:#f7f7f7;border:1px solid #b0b3ba;border-right:none"></div>
<div class="a" style="left:943.5px;top:103px;width:15px;height:15px;background:#dadada;border:1px solid #b0b3ba;border-right:none"></div>
<div class="a" style="left:943.5px;top:118px;width:15px;height:14.5px;background:#dadada;border:1px solid #b0b3ba;border-right:none"></div>
<div class="a" style="left:943.5px;top:132.5px;width:15px;height:14.5px;background:#dadada;border:1px solid #b0b3ba;border-right:none"></div>
<div class="a" style="left:943.5px;top:147px;width:15px;height:15px;background:#dadada;border:1px solid #b0b3ba;border-right:none"></div>
<div class="a" style="left:943.5px;top:162px;width:15px;height:15px;background:#dadada;border:1px solid #b0b3ba;border-right:none"></div>
<div class="a" style="left:943.5px;top:177px;width:15px;height:15px;background:#dadada;border:1px solid #b0b3ba;border-right:none"></div>
<svg class="a" style="left:945px;top:90px" width="12" height="102" viewBox="0 0 12 102">
 <path d="M1.5 6 L6 2 L10.5 6" stroke="#24506e" stroke-width="1.3" fill="none"/><path d="M3 5.5 V10.5 H9 V5.5" stroke="#24506e" stroke-width="1.1" fill="#fff"/><rect x="5" y="7.5" width="2" height="3" fill="#24506e"/>
 <g transform="translate(0,15)"><path d="M3 3 L6 1.5 L9 3 V10 L6 11.5 L3 10 Z" fill="#d8d8d8" stroke="#777" stroke-width="0.8"/><path d="M6 4 V11.5 M3 3 L6 4.5 L9 3" stroke="#777" stroke-width="0.6" fill="none"/></g>
 <g transform="translate(0,29.5)"><path d="M1.5 3 H4.5 L5.5 4 H9.5 V10.5 H1.5 Z" fill="#f2f2f2" stroke="#777" stroke-width="0.8"/><path d="M1.5 10.5 L3 6.5 H11 L9.5 10.5 Z" fill="#fafafa" stroke="#777" stroke-width="0.8"/></g>
 <g transform="translate(0,44)"><rect x="1.5" y="2" width="9" height="8.5" fill="#fff" stroke="#666" stroke-width="0.8"/><path d="M2 2.5 L10 10 M10 2.5 L2 10" stroke="#e0a020" stroke-width="1.3"/><rect x="4" y="5" width="4" height="2.5" fill="#f0c040"/></g>
 <g transform="translate(0,58.5)"><circle cx="6" cy="6" r="4.3" fill="#3a70d0"/><path d="M6 6 L6 1.7 A4.3 4.3 0 0 1 10.3 6 Z" fill="#e03a20"/><path d="M6 6 L10.3 6 A4.3 4.3 0 0 1 6 10.3 Z" fill="#f0c020"/><path d="M6 6 L6 10.3 A4.3 4.3 0 0 1 1.7 6 Z" fill="#30a040"/></g>
 <g transform="translate(0,73.5)"><rect x="1.5" y="1.5" width="9" height="9" fill="#fff" stroke="#2a5a80" stroke-width="0.9"/><path d="M3 4 H4 M3 6 H4 M3 8 H4" stroke="#2a5a80" stroke-width="1"/><path d="M5 4 H9.5 M5 6 H9.5 M5 8 H9.5" stroke="#456" stroke-width="0.8"/></g>
 <g transform="translate(0,88)"><rect x="1" y="2.5" width="6.5" height="4.5" rx="0.8" fill="#3f86c0"/><rect x="4.5" y="5" width="6.5" height="4.5" rx="0.8" fill="#fff" stroke="#666" stroke-width="0.7"/><path d="M6 9.5 V11 L7.5 9.5" fill="#666"/></g>
</svg>
<!-- model: handlebar -->
<svg class="a" style="left:380px;top:170px" width="210" height="250" viewBox="380 170 210 250">
 <defs>
  <linearGradient id="barg" x1="0" y1="0" x2="0" y2="1"><stop offset="0" stop-color="#b01000"/><stop offset=".25" stop-color="#f02a00"/><stop offset=".55" stop-color="#ff2600"/><stop offset="1" stop-color="#8a1800"/></linearGradient>
  <linearGradient id="tubeg" x1="0" y1="0" x2="0" y2="1"><stop offset="0" stop-color="#ff7000"/><stop offset=".09" stop-color="#f8f000"/><stop offset=".18" stop-color="#90f000"/><stop offset=".28" stop-color="#00e000"/><stop offset=".40" stop-color="#00e890"/><stop offset=".52" stop-color="#00f0f0"/><stop offset=".62" stop-color="#0090ff"/><stop offset=".72" stop-color="#0030ff"/><stop offset="1" stop-color="#0010d0"/></linearGradient>
  <linearGradient id="tubes" x1="0" y1="0" x2="1" y2="0"><stop offset="0" stop-color="#000" stop-opacity=".12"/><stop offset=".3" stop-color="#fff" stop-opacity=".08"/><stop offset=".6" stop-color="#000" stop-opacity="0"/><stop offset="1" stop-color="#000" stop-opacity=".55"/></linearGradient>
 </defs>
 <!-- vertical tube -->
 <rect x="479" y="203" width="11" height="203" fill="url(#tubeg)"/>
 <rect x="479" y="203" width="11" height="203" fill="url(#tubes)"/>
 <!-- top joint -->
 <rect x="479" y="200" width="12" height="12" fill="#f86800"/>
 <rect x="479" y="200" width="12" height="12" fill="url(#tubes)"/>
 <path d="M479 211.5 H491" stroke="#302000" stroke-width="0.7"/>
 <path d="M481 201 V211 M489 201 V211" stroke="#803000" stroke-width="0.5"/>
 <!-- handlebar left -->
 <path d="M396 191 L470 192 L470 202 L396 202 Z" fill="url(#barg)"/>
 <path d="M396 191 V202" stroke="#300" stroke-width="1"/>
 <!-- clamp -->
 <rect x="470" y="190.5" width="29" height="13" fill="url(#barg)"/>
 <path d="M470 190.5 V203.5 M499 190.5 V204" stroke="#300" stroke-width="0.8"/>
 <!-- right bar -->
 <path d="M499 192.5 L574.5 193.5 L574.5 203.5 L499 203.5 Z" fill="url(#barg)"/>
 <path d="M574.5 193.5 V203.5" stroke="#200" stroke-width="1.4"/>
 <!-- force arrows top -->
 <g stroke="#b8661a" stroke-width="1" fill="#a85a10">
  <path d="M467 178 V190"/><path d="M465.3 188 L467 193.5 L468.7 188 Z"/>
  <path d="M475 178 V190"/><path d="M473.3 188 L475 193.5 L476.7 188 Z"/>
  <path d="M482.5 178 V190"/><path d="M480.8 188 L482.5 193.5 L484.2 188 Z"/>
  <path d="M490.5 178 V190"/><path d="M488.8 188 L490.5 193.5 L492.2 188 Z"/>
  <path d="M468.5 203 V214"/><path d="M466.5 213 L468.5 219 L470.5 213 Z"/>
  <path d="M476.5 203 V214"/><path d="M474.8 212 L476.5 217.5 L478.2 212 Z"/>
  <path d="M485 203 V214"/><path d="M483.3 212 L485 217.5 L486.7 212 Z"/>
  <path d="M492.5 203 V214"/><path d="M490.8 213 L492.5 218.5 L494.2 213 Z"/>
 </g>
 <!-- blue markers -->
 <g fill="#2030ff">
  <path d="M391 189.5 L389.3 194 L392.7 194 Z"/><path d="M387 196 L391.5 194.3 L391.5 197.7 Z"/><path d="M391 201.5 L389.3 197.5 L392.7 197.5 Z"/>
  <path d="M391 194 V198" stroke="#2030ff" stroke-width="0.8"/>
  <path d="M478.5 199 L484 198.5 L480.5 202 Z"/><path d="M485.5 198 L491 199.5 L485.5 201 Z"/><path d="M479.5 211 L480.5 217 L482.5 211.5 Z"/>
  <path d="M565 208 L567 203 L569 206 Z"/><path d="M568 205 L569 199" stroke="#2030ff" stroke-width="0.8"/>
 </g>
 <!-- pink line -->
 <path d="M568.6 200 L572.2 403" stroke="#f080c0" stroke-width="0.8"/>
 <rect x="567" y="197.5" width="3" height="3" fill="#ffc0e0" stroke="#c04080" stroke-width="0.6"/>
 <rect x="570.7" y="401.7" width="3" height="3" fill="#ffe0f0" stroke="#c04080" stroke-width="0.6"/>
 <!-- fixtures -->
 <g fill="#18d030">
  <path d="M477.5 405 L480 403.5 L484 406 L488 404.5 L492 404 L496 403.5 L497 405.5 L493 407 L490 409 L487 411.5 L484 410 L481 412.5 L478.5 410 Z"/>
 </g>
 <g fill="#0a5a10"><circle cx="480.5" cy="408.5" r="1"/><circle cx="484" cy="410.5" r="0.9"/><circle cx="487" cy="408" r="1"/><circle cx="490" cy="407" r="0.8"/><circle cx="494" cy="405.5" r="0.8"/></g>
 <path d="M497 404.5 L502.5 406 L497 407.5 Z" fill="#2030ff"/>
</svg>
<!-- legend -->
<div class="vt" style="left:793px;top:149.5px;font-size:5.8px">AMPRES</div>
<div class="a" style="left:793px;top:171px;width:14px;height:205px;background:linear-gradient(#ff0000 0%,#ffff00 25%,#00ff00 50%,#00ffff 75%,#0000ff 100%);border-top:1px solid #6a6a6a"></div>
<div class="a" style="left:793px;top:375px;width:14px;height:1px;background:#00008a"></div>
<div class="lg" style="top:167.1px">4.995e-002</div>
<div class="lg" style="top:184.1px">4.579e-002</div>
<div class="tk" style="top:188.9px"></div>
<div class="lg" style="top:201.1px">4.163e-002</div>
<div class="tk" style="top:205.9px"></div>
<div class="lg" style="top:218.1px">3.747e-002</div>
<div class="tk" style="top:222.9px"></div>
<div class="lg" style="top:235.1px">3.330e-002</div>
<div class="tk" style="top:239.9px"></div>
<div class="lg" style="top:252.1px">2.914e-002</div>
<div class="tk" style="top:256.9px"></div>
<div class="lg" style="top:269.0px">2.498e-002</div>
<div class="tk" style="top:273.8px"></div>
<div class="lg" style="top:286.0px">2.081e-002</div>
<div class="tk" style="top:290.8px"></div>
<div class="lg" style="top:303.0px">1.665e-002</div>
<div class="tk" style="top:307.8px"></div>
<div class="lg" style="top:320.0px">1.249e-002</div>
<div class="tk" style="top:324.8px"></div>
<div class="lg" style="top:337.0px">8.326e-003</div>
<div class="tk" style="top:341.8px"></div>
<div class="lg" style="top:354.0px">4.163e-003</div>
<div class="tk" style="top:358.8px"></div>
<div class="lg" style="top:371.0px">0.000e+000</div>
<!-- mode shape -->
<svg class="a" style="left:792px;top:389px" width="15" height="7.5" viewBox="0 0 15 7.5"><rect x="0.6" y="0.6" width="13.8" height="6.3" rx="0.8" fill="#dcdce8" stroke="#2020f8" stroke-width="1.2"/><path d="M5 2 L2.5 3.75 L5 5.5 M8.5 2 L6 3.75 L8.5 5.5 M12 2 L9.5 3.75 L12 5.5" stroke="#2020f8" stroke-width="0.9" fill="none"/></svg>
<div class="vt" style="left:808px;top:390px">Mode shape: 1</div>
<svg class="a" style="left:853px;top:389.5px" width="15" height="7.5" viewBox="0 0 15 7.5"><rect x="0.6" y="0.6" width="13.8" height="6.3" rx="0.8" fill="#dcdce8" stroke="#2020f8" stroke-width="1.2"/><path d="M3 2 L5.5 3.75 L3 5.5 M6.5 2 L9 3.75 L6.5 5.5 M10 2 L12.5 3.75 L10 5.5" stroke="#2020f8" stroke-width="0.9" fill="none"/></svg>
<!-- triad -->
<svg class="a" style="left:120px;top:452px" width="32" height="30" viewBox="120 452 32 30">
 <path d="M145 459 H131" stroke="#1a1aa0" stroke-width="2.2"/><path d="M127 459.5 L132 456 V463 Z" fill="#1a1ab0"/>
 <text x="121" y="462" font-family="Liberation Sans" font-size="6" fill="#2a2aff">Z</text>
 <path d="M145.5 460 V473" stroke="#c01010" stroke-width="1.8"/><path d="M143 471 L146.5 476 L149 471 Z" fill="#8a0a0a"/>
 <path d="M145 460 L142 466 L141 473" stroke="#207a20" stroke-width="2" fill="none"/><path d="M139 465 L142 463 L145 467 Z" fill="#207a20"/>
 <text x="144" y="481" font-family="Liberation Sans" font-size="5.5" fill="#f05050">X</text>
</svg>
<!-- watermark -->
<div class="t" style="left:303px;top:471px;font-size:9.7px;font-weight:bold;color:#8e929c">SOLIDWORKS Educational Product. For Instructional Use Only.</div>
<!-- dialog -->
<div class="a" style="left:169px;top:229px;width:238px;height:179px;background:#f0f0f0;border:1px solid #6ea2dc;box-shadow:0 0 6px rgba(0,0,0,.22)"></div>
<div class="a" style="left:170px;top:230px;width:236px;height:19px;background:#fff"></div>
<div class="t" style="left:174px;top:235.5px;font-size:7.2px;color:#222">List Modes</div>
<div class="a" style="left:329px;top:238.5px;width:7px;height:1px;background:#333"></div>
<div class="a" style="left:358px;top:236px;width:7px;height:6px;border:1px solid #333"></div>
<svg class="a" style="left:387px;top:235px" width="8" height="8" viewBox="0 0 8 8"><path d="M0.5 0.5 L7.5 7.5 M7.5 0.5 L0.5 7.5" stroke="#333" stroke-width="1"/></svg>
<div class="t" style="left:175.5px;top:263.5px;font-size:6.3px;color:#222">Study name:Buckling 1</div>
<!-- list view -->
<div class="a" style="left:176px;top:277px;width:223px;height:99px;background:#fff;border-top:1px solid #777;border-left:1px solid #777"></div>
<div class="a" style="left:177px;top:278px;width:221px;height:9px;background:#f0f0f0;border-bottom:1px solid #a0a0a0"></div>
<div class="a" style="left:224px;top:278px;width:1px;height:9px;background:#b0b0b0"></div>
<div class="a" style="left:304px;top:278px;width:1px;height:19px;background:#d8d8d8"></div>
<div class="a" style="left:177px;top:296.5px;width:221px;height:1px;background:#9a9a9a"></div>
<div class="t" style="left:200.5px;top:279.5px;font-size:6.6px;color:#222;transform:translateX(-50%)">Mode No.</div>
<div class="t" style="left:264.5px;top:279.5px;font-size:6.6px;color:#222;transform:translateX(-50%)">Buckling Factor of Safety</div>
<div class="a" style="left:177px;top:287.5px;width:47px;height:9px;background:#0a78d7"></div>
<div class="t" style="left:200.5px;top:289px;font-size:6px;color:#fff;transform:translateX(-50%)">1</div>
<div class="t" style="left:260px;top:289px;font-size:6.6px;color:#222;transform:translateX(-50%)">2.3851</div>
<div class="a" style="left:398px;top:278px;width:1px;height:98px;background:#e4e4e4"></div>
<!-- buttons -->
<div class="a" style="left:186.5px;top:387px;width:43px;height:13.5px;background:#e1e1e1;border:1px solid #0a78d7"></div>
<div class="t" style="left:208px;top:390.5px;font-size:6.5px;color:#222;transform:translateX(-50%)">Close</div>
<div class="a" style="left:264px;top:387px;width:43px;height:13.5px;background:#e1e1e1;border:1px solid #adadad"></div>
<div class="t" style="left:285.5px;top:390.5px;font-size:6.5px;color:#222;transform:translateX(-50%)">Save</div>
<div class="a" style="left:342px;top:387px;width:43.5px;height:13.5px;background:#e1e1e1;border:1px solid #adadad"></div>
<div class="t" style="left:363.5px;top:390.5px;font-size:6.5px;color:#222;transform:translateX(-50%)">Help</div>


<!-- ===== bottom tabs ===== -->
<div class="a" style="left:0;top:493px;width:960px;height:11px;background:#f7f7f7;border-top:1px solid #b8bcc6;border-bottom:1px solid #c8c8c8"></div>
<div class="a" style="left:0;top:494px;width:41px;height:10px;background:#a8a8bc"></div>
<div class="a" style="left:0;top:494px;width:1px;height:10px;background:#9cc4c0"></div>
<svg class="a" style="left:1px;top:494px" width="40" height="10" viewBox="0 0 40 10">
 <rect x="0" y="0" width="40" height="1" fill="#50505e"/>
 <g fill="#b4b4c9"><rect x="0.5" y="1.3" width="9" height="8"/><rect x="10.5" y="1.3" width="9" height="8"/><rect x="20.5" y="1.3" width="9" height="8"/><rect x="30.5" y="1.3" width="9" height="8"/></g>
 <g fill="#7c7c94"><rect x="3.5" y="3" width="1" height="4.5"/><path d="M7.5 3 L4.8 5.25 L7.5 7.5 Z"/><path d="M16.5 3 L13.5 5.25 L16.5 7.5 Z"/><path d="M24 3 L27 5.25 L24 7.5 Z"/><path d="M32.5 3 L35.2 5.25 L32.5 7.5 Z"/><rect x="35.5" y="3" width="1" height="4.5"/></g>
</svg>
<div class="a" style="left:41px;top:494px;width:38.5px;height:10px;background:#dcdcdc;border:1px solid #b8b8b8;border-top:none"></div>
<div class="t" style="left:60.5px;top:496px;font-size:7.5px;color:#333;transform:translateX(-50%)">Model</div>
<div class="a" style="left:79px;top:494px;width:45px;height:10px;background:#dcdcdc;border:1px solid #b8b8b8;border-top:none"></div>
<div class="t" style="left:101.5px;top:496px;font-size:7.5px;color:#333;transform:translateX(-50%)">3D Views</div>
<div class="a" style="left:124px;top:494px;width:68px;height:10px;background:#dcdcdc;border:1px solid #b8b8b8;border-top:none"></div>
<div class="t" style="left:158px;top:496px;font-size:8px;color:#333;transform:translateX(-50%)">Motion Study 1</div>
<div class="a" style="left:192px;top:494px;width:61px;height:10px;background:#f7f7f7;border-right:1px solid #b8b8b8"></div>
<svg class="a" style="left:196px;top:495px" width="6" height="7" viewBox="0 0 6 7"><path d="M3 0 V5" stroke="#c03030" stroke-width="1"/><path d="M1 4 H5" stroke="#207a20" stroke-width="1"/><path d="M0 6 H6" stroke="#555" stroke-width="0.6"/></svg>
<div class="t" style="left:204px;top:495.5px;font-size:7.7px;font-weight:bold;color:#111">Buckling 1</div>


<!-- ===== status bar ===== -->
<div class="a" style="left:0;top:504px;width:960px;height:11px;background:#e9e9e9"></div>
<div class="t" style="left:1px;top:507px;font-size:7.2px;color:#222">SOLIDWORKS Student Edition - Academic Use Only</div>
<div class="t" style="left:734px;top:507px;font-size:7.5px;color:#222">Under Defined</div>
<div class="a" style="left:787px;top:505px;width:1px;height:10px;background:#d0d0d0"></div>
<div class="t" style="left:792px;top:507px;font-size:7.5px;color:#222">Editing Assembly</div>
<div class="a" style="left:852px;top:505px;width:1px;height:10px;background:#d0d0d0"></div>
<div class="a" style="left:860px;top:505px;width:1px;height:10px;background:#d0d0d0"></div>
<div class="t" style="left:877px;top:507px;font-size:7.5px;color:#222">Custom</div>
<div class="dd" style="left:915px;top:509px;border-top:none;border-bottom:2px solid #555"></div>
<svg class="a" style="left:949px;top:506px" width="10" height="9" viewBox="0 0 10 9"><path d="M1 3 Q1 1 4 1 H8 Q9.5 1 9.5 3 V5 Q9.5 7 7.5 7 H5 L3 8.5 V7 Q1 7 1 5 Z" fill="#ddd" stroke="#777" stroke-width="0.8"/><path d="M3 3 L7 5 M3 5 L7 3" stroke="#777" stroke-width="0.6"/></svg>

<!-- ===== taskbar ===== -->
<div class="a" style="left:0;top:515px;width:960px;height:25px;background:#0c1017"></div>
<!-- start -->
<svg class="a" style="left:10px;top:522px" width="11" height="11" viewBox="0 0 11 11"><path d="M0 1.5 L4.8 0.8 V5 H0 Z M5.5 0.7 L11 0 V5 H5.5 Z M0 5.8 H4.8 V10 L0 9.3 Z M5.5 5.8 H11 V11 L5.5 10.3 Z" fill="#fff"/></svg>
<!-- search box -->
<div class="a" style="left:30px;top:515px;width:215px;height:25px;background:#f2f2f2"></div>
<div class="a" style="left:36.5px;top:521.5px;width:12px;height:12px;border:2px solid #111;border-radius:50%"></div>
<div class="t" style="left:55px;top:523.5px;font-size:8.7px;color:#333">Type here to search</div>
<svg class="a" style="left:227px;top:521px" width="8" height="13" viewBox="0 0 8 13"><rect x="2.3" y="0.8" width="3.4" height="7" rx="1.7" fill="none" stroke="#333" stroke-width="1"/><path d="M0.8 5.5 Q0.8 9.5 4 9.5 Q7.2 9.5 7.2 5.5 M4 9.5 V12 M2 12 H6" fill="none" stroke="#333" stroke-width="0.9"/></svg>
<!-- task view -->
<svg class="a" style="left:254px;top:521px" width="12" height="13" viewBox="0 0 12 13"><rect x="0.5" y="2.5" width="8" height="8" fill="none" stroke="#ddd" stroke-width="1"/><path d="M0 0.5 H9 M0 12.5 H9 M11 1 V4 M11 5.5 V7.5 M11 9 V12" stroke="#ddd" stroke-width="1"/></svg>
<!-- explorer -->
<svg class="a" style="left:285px;top:520px" width="14" height="13" viewBox="0 0 14 13"><path d="M0.5 1 H5 L6 2.5 H13.5 V12.5 H0.5 Z" fill="#f8d36a"/><rect x="0.5" y="4" width="13" height="8.5" fill="#fbe29a"/><rect x="3.5" y="7.5" width="7" height="5" fill="#3aa0e0"/><rect x="5" y="9" width="4" height="3.5" fill="#fbe29a"/></svg>
<div class="a" style="left:279px;top:538px;width:26px;height:2px;background:#76b9ed"></div>
<!-- word -->
<svg class="a" style="left:316px;top:520px" width="14" height="13" viewBox="0 0 14 13"><rect x="5" y="1.5" width="8.5" height="10" fill="#fff" stroke="#2b579a" stroke-width="0.8"/><path d="M7 4 H12 M7 6.5 H12 M7 9 H12" stroke="#2b579a" stroke-width="0.9"/><rect x="0" y="0.5" width="8" height="12" fill="#2b579a"/><text x="1" y="9.5" font-family="Liberation Sans" font-size="7.5" font-weight="bold" fill="#fff">W</text></svg>
<!-- excel -->
<svg class="a" style="left:346px;top:520px" width="14" height="13" viewBox="0 0 14 13"><rect x="5" y="1.5" width="8.5" height="10" fill="#fff" stroke="#217346" stroke-width="0.8"/><path d="M7 4 H12 M7 6.5 H12 M7 9 H12 M9.5 2 V11" stroke="#217346" stroke-width="0.8"/><rect x="0" y="0.5" width="8" height="12" fill="#217346"/><text x="1.5" y="9.5" font-family="Liberation Sans" font-size="7.5" font-weight="bold" fill="#fff">X</text></svg>
<!-- matlab -->
<svg class="a" style="left:378px;top:520px" width="14" height="14" viewBox="0 0 14 14"><path d="M0 8 L5 5 L8 1 L11 6 L14 12 L10 9 L6 11 Z" fill="#e86a20"/><path d="M0 8 L5 5 L6 8 L3 10 Z" fill="#4a8ad0"/><path d="M8 1 L11 6 L14 12 L10 9 Z" fill="#c04010"/></svg>
<!-- sw -->
<svg class="a" style="left:409px;top:519px" width="15" height="16" viewBox="0 0 15 16"><path d="M0.5 3 L6 0.5 L14.5 2 V12 L9 15 L0.5 13 Z" fill="#c81e1e"/><path d="M0.5 3 L9 4.5 V15 L0.5 13 Z" fill="#e02828"/><text x="1.5" y="12" font-family="Liberation Sans" font-size="7" font-weight="bold" fill="#fff">S</text><text x="8.5" y="10.5" font-family="Liberation Sans" font-size="6" font-weight="bold" fill="#fff">W</text><text x="8" y="15.5" font-family="Liberation Sans" font-size="3" fill="#ddd">2017</text></svg>
<!-- xmind-like -->
<svg class="a" style="left:439px;top:519px" width="15" height="15" viewBox="0 0 15 15"><rect x="0" y="0" width="15" height="15" fill="#fff"/><path d="M2 3 Q6 3 7.5 7.5 Q9 12 13 12 M2 12 Q6 12 7.5 7.5 Q9 3 13 3" stroke="#4aa0e0" stroke-width="1.4" fill="none"/><path d="M10 3 H14 M10 12 H14" stroke="#f0a040" stroke-width="1.4"/></svg>
<!-- chrome -->
<svg class="a" style="left:471px;top:520px" width="14" height="14" viewBox="0 0 14 14"><circle cx="7" cy="7" r="6.5" fill="#db4437"/><path d="M7 7 L1.4 3.75 A6.5 6.5 0 0 0 7 13.5 Z" fill="#0f9d58"/><path d="M7 7 L7 13.5 A6.5 6.5 0 0 0 12.6 3.75 Z" fill="#f4b400"/><path d="M7 7 L12.6 3.75 A6.5 6.5 0 0 0 1.4 3.75 Z" fill="#db4437"/><circle cx="7" cy="7" r="3" fill="#fff"/><circle cx="7" cy="7" r="2.3" fill="#4285f4"/></svg>
<div class="a" style="left:465px;top:538px;width:26px;height:2px;background:#76b9ed"></div>
<!-- orange -->
<svg class="a" style="left:502px;top:520px" width="14" height="14" viewBox="0 0 14 14"><circle cx="7" cy="7" r="6.5" fill="#f08a20"/><circle cx="7" cy="7" r="3" fill="none" stroke="#fff" stroke-width="1.3"/><path d="M7 1.5 V4 M7 10 V12.5 M1.5 7 H4 M10 7 H12.5 M3 3 L4.8 4.8 M9.2 9.2 L11 11 M11 3 L9.2 4.8 M4.8 9.2 L3 11" stroke="#fff" stroke-width="1.1"/></svg>
<!-- ppt -->
<svg class="a" style="left:533px;top:520px" width="14" height="13" viewBox="0 0 14 13"><rect x="5" y="1.5" width="8.5" height="10" fill="#fff" stroke="#d24726" stroke-width="0.8"/><path d="M7 4 H12 M7 6.5 H12 M7 9 H12" stroke="#d24726" stroke-width="0.9"/><rect x="0" y="0.5" width="8" height="12" fill="#d24726"/><text x="1.5" y="9.5" font-family="Liberation Sans" font-size="7.5" font-weight="bold" fill="#fff">P</text></svg>
<div class="a" style="left:527px;top:538px;width:26px;height:2px;background:#76b9ed"></div>
<!-- active sw -->
<div class="a" style="left:556px;top:515px;width:30px;height:25px;background:#2e2f33"></div>
<svg class="a" style="left:564px;top:519px" width="15" height="16" viewBox="0 0 15 16"><path d="M0.5 3 L6 0.5 L14.5 2 V12 L9 15 L0.5 13 Z" fill="#c81e1e"/><path d="M0.5 3 L9 4.5 V15 L0.5 13 Z" fill="#e02828"/><text x="1.5" y="12" font-family="Liberation Sans" font-size="7" font-weight="bold" fill="#fff">S</text><text x="8.5" y="10.5" font-family="Liberation Sans" font-size="6" font-weight="bold" fill="#fff">W</text><text x="8" y="15.5" font-family="Liberation Sans" font-size="3" fill="#ddd">2017</text></svg>
<div class="a" style="left:556px;top:538px;width:30px;height:2px;background:#76b9ed"></div>
<!-- tray -->
<svg class="a" style="left:764px;top:520px" width="12" height="12" viewBox="0 0 12 12"><circle cx="4" cy="6" r="2" fill="none" stroke="#ddd" stroke-width="1"/><path d="M0.5 11.5 Q1 8.5 4 8.5 Q7 8.5 7.5 11.5" fill="none" stroke="#ddd" stroke-width="1"/><circle cx="8" cy="2.5" r="1.8" fill="none" stroke="#ddd" stroke-width="1"/><path d="M6 6 Q7 4.5 8 4.5 Q10.5 4.5 11 7" fill="none" stroke="#ddd" stroke-width="1"/></svg>
<svg class="a" style="left:791px;top:524px" width="9" height="5" viewBox="0 0 9 5"><path d="M0.5 4.5 L4.5 0.8 L8.5 4.5" fill="none" stroke="#ddd" stroke-width="1"/></svg>
<svg class="a" style="left:808px;top:522px" width="14" height="9" viewBox="0 0 14 9"><rect x="0.5" y="1.5" width="11" height="6" fill="none" stroke="#ddd" stroke-width="1"/><rect x="1.5" y="2.5" width="9" height="4" fill="#ddd"/><rect x="11.5" y="3.2" width="1.5" height="2.6" fill="#ddd"/><path d="M0 0.5 H4" stroke="#ddd" stroke-width="1"/></svg>
<svg class="a" style="left:829px;top:521px" width="13" height="8" viewBox="0 0 13 8"><path d="M2.5 8 Q0 8 0 6 Q0 4 2.5 4 Q3 1 6 1 Q9 1 9.5 3.5 Q13 3.5 13 6 Q13 8 11 8 Z" fill="#eee"/></svg>
<svg class="a" style="left:850px;top:523px" width="10" height="8" viewBox="0 0 10 8"><path d="M0.5 2.5 H2 L4 0.5 V7.5 L2 5.5 H0.5 Z" fill="none" stroke="#bbb" stroke-width="0.8"/><path d="M6 2.5 L9 5.5 M9 2.5 L6 5.5" stroke="#bbb" stroke-width="0.8"/></svg>
<svg class="a" style="left:869px;top:520px" width="12" height="12" viewBox="0 0 12 12"><g fill="none" stroke="#bbb" stroke-width="0.9" stroke-dasharray="1.2 0.6"><path d="M7.5 11 A3 3 0 0 1 10.5 8"/><path d="M4.5 11 A6 6 0 0 1 10.5 5"/><path d="M1.5 11 A9 9 0 0 1 10.5 2"/></g><circle cx="10.2" cy="10.7" r="0.9" fill="#ccc"/></svg>
<div class="t" style="left:892.5px;top:517.1px;font-size:8.3px;color:#eee;transform:scaleX(.92);transform-origin:0 0">6:55 PM</div>
<div class="t" style="left:890.6px;top:529.4px;font-size:8.3px;color:#eee;transform:scaleX(.94);transform-origin:0 0">6/8/2018</div>
<svg class="a" style="left:934px;top:522px" width="11" height="11" viewBox="0 0 11 11"><path d="M0.5 0.5 H10.5 V8.5 H6.5 L5 10 L3.5 8.5 H0.5 Z" fill="none" stroke="#ccc" stroke-width="0.9"/></svg>
<div class="a" style="left:956.5px;top:515px;width:1px;height:25px;background:#3a3d44"></div>

</body></html>
